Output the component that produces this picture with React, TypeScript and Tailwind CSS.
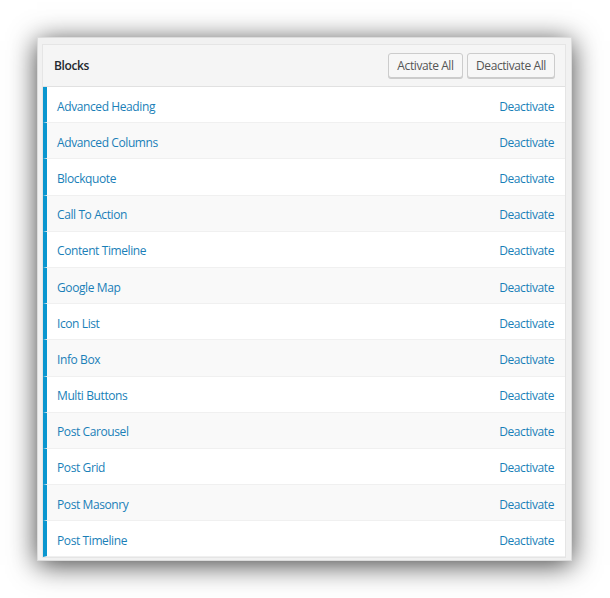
const blocks = [
  "Advanced Heading",
  "Advanced Columns",
  "Blockquote",
  "Call To Action",
  "Content Timeline",
  "Google Map",
  "Icon List",
  "Info Box",
  "Multi Buttons",
  "Post Carousel",
  "Post Grid",
  "Post Masonry",
  "Post Timeline",
];

export default function App() {
  return (
    <div className="w-[610px] h-[598px] bg-white pt-[37px] pl-[37px] font-['Open_Sans',sans-serif] tracking-[-0.4px] overflow-hidden">
      <div className="w-[535px] h-[524px] bg-[#f1f1f1] border border-[#dcdcdc] pt-[6px] pl-[4px] pr-[5px] shadow-[0_4px_26px_rgba(0,0,0,0.75)] overflow-hidden">
        <div className="bg-white border border-[#e5e5e5]">
          {/* header */}
          <div className="h-[42px] flex items-center justify-between pl-[11px] pr-[10px] bg-[#f5f5f5] border-b border-[#e1e1e1]">
            <span className="text-[12px] font-semibold text-[#23282d]">Blocks</span>
            <div className="flex gap-[4px]">
              <button
                type="button"
                className="h-[25px] w-[75px] rounded-[3px] border border-[#cccccc] bg-[#f7f7f7] shadow-[0_1px_0_#cccccc] text-[12px] text-[#555555]"
              >
                Activate All
              </button>
              <button
                type="button"
                className="h-[25px] w-[88px] rounded-[3px] border border-[#cccccc] bg-[#f7f7f7] shadow-[0_1px_0_#cccccc] text-[12px] text-[#555555]"
              >
                Deactivate All
              </button>
            </div>
          </div>

          {blocks.map((name, i) => (
            <div
              key={name}
              className={
                "h-[36.2px] flex items-center justify-between border-l-4 border-[#0a96cf] border-b border-b-[#f0f0f0] pt-[4px] pl-[10px] pr-[11px] text-[12px] text-[#1a7fb8] " +
                (i % 2 === 0 ? "bg-white" : "bg-[#f9f9f9]")
              }
            >
              <span>{name}</span>
              <span>Deactivate</span>
            </div>
          ))}
        </div>
      </div>
    </div>
  );
}
